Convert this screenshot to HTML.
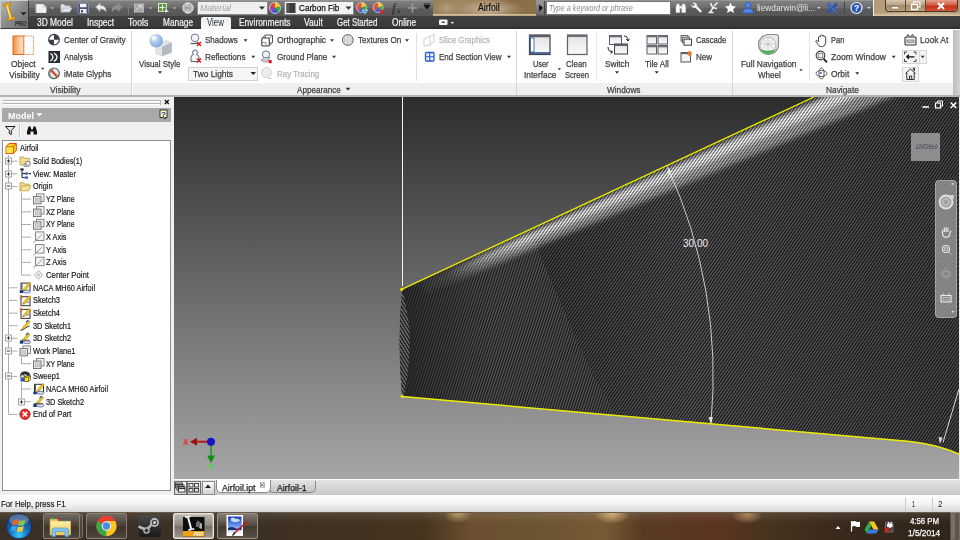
<!DOCTYPE html>
<html>
<head>
<meta charset="utf-8">
<title>Airfoil</title>
<style>
*{box-sizing:border-box;margin:0;padding:0}
html,body{width:960px;height:540px;overflow:hidden;background:#f0f0f0}
body{font-family:"Liberation Sans",sans-serif;font-size:11px;color:#3c3c3c;position:relative}
.abs{position:absolute}
.t{position:absolute;white-space:nowrap;transform-origin:0 50%}
/* top bars */
#qat{left:0;top:0;width:433px;height:16px;background:linear-gradient(#a0a0a0 0,#808080 8%,#6c6c6c 48%,#5c5c5c 56%,#565656 100%)}
#glass1{left:433px;top:0;width:103px;height:16px;background:linear-gradient(rgba(0,0,0,0) 88%,rgba(240,225,190,.75) 91%,rgba(240,225,190,.75) 96%,#4a4030 100%),radial-gradient(ellipse 34px 10px at 58px 9px,rgba(238,220,205,.6),transparent),radial-gradient(ellipse 12px 7px at 14px 8px,rgba(220,200,170,.35),transparent),linear-gradient(90deg,#98805a 0,#a08862 25%,#9a7e56 50%,#886c46 75%,#8c7048 100%)}
#info{left:536px;top:0;width:337px;height:16px;background:linear-gradient(#a0a0a0 0,#808080 8%,#6c6c6c 48%,#5c5c5c 56%,#565656 100%)}
#glass2{left:873.500px;top:0;width:86.500px;height:16px;background:linear-gradient(rgba(255,255,255,0) 80%,rgba(255,240,210,.45) 95%),linear-gradient(90deg,#b39a78,#bea888 40%,#b49c7a)}
#tabs{left:0;top:16px;width:960px;height:13.200px;background:linear-gradient(#404040,#3a3a3a 80%,#2c2c2c)}
#ribbon{left:0;top:29.200px;width:960px;height:54px;background:#fff}
#riblab{left:0;top:83px;width:960px;height:12px;background:#efefef}
#ribline{left:0;top:95px;width:960px;height:1.500px;background:#b4b4b4}
/* left panel */
#lp{left:0;top:97px;width:174px;height:398px;background:#f0f0f0}
#mh{left:2px;top:108px;width:168.500px;height:14px;background:#a9a9a9}
#tree{left:2px;top:140px;width:169px;height:351px;background:#fff;border:1px solid #8e8e8e}
/* viewport */
#vp{left:174px;top:96.500px;width:786px;height:382.500px;background:linear-gradient(#2c2c2c,#a6a6a6);overflow:hidden}
#tabbar{left:174px;top:479.500px;width:786px;height:15px;background:linear-gradient(#e4e4e4,#c8c8c8)}
#status{left:0;top:494.500px;width:960px;height:17.500px;background:linear-gradient(#fefefe,#f6f6f6 45%,#e4e4e4 80%,#d4d4d4)}
#task{left:0;top:511.500px;width:960px;height:28.500px;background:radial-gradient(ellipse 14px 9px at 458px 2px,rgba(225,185,125,.65),transparent),radial-gradient(ellipse 18px 10px at 612px 2px,rgba(240,200,140,.75),transparent),radial-gradient(ellipse 16px 9px at 747px 3px,rgba(225,180,120,.6),transparent),linear-gradient(rgba(255,255,255,.10),rgba(255,255,255,0) 40%),linear-gradient(90deg,#3a3026 0,#3c3024 26%,#45341f 44%,#6a5030 49%,#6c5432 56%,#765a34 63%,#5a3a22 67%,#5c3420 75%,#4a3420 79%,#38291c 88%,#30241a 100%)}
</style>
</head>
<body>
<div id="qat" class="abs"></div>
<div id="glass1" class="abs"></div>
<div id="info" class="abs"></div>
<div id="glass2" class="abs"></div>
<div id="tabs" class="abs"></div>
<div id="ribbon" class="abs"></div>
<div id="riblab" class="abs"></div>
<div id="ribline" class="abs"></div>
<div id="lp" class="abs"></div>
<div id="mh" class="abs"></div>
<div id="tree" class="abs"></div>
<div id="vp" class="abs">
<!--VIEWPORT-->
<svg class="abs" style="left:0;top:0.500px" width="786" height="382" viewBox="0 0 786 382">
<defs>
<linearGradient id="cf" gradientUnits="userSpaceOnUse" x1="0" y1="0" x2="2.080" y2="1.457" spreadMethod="repeat">
<stop offset="0" stop-color="#56565a"/><stop offset="0.25" stop-color="#56565a"/><stop offset="0.5" stop-color="#1e1e1e"/><stop offset="0.75" stop-color="#1e1e1e"/><stop offset="1" stop-color="#56565a"/>
</linearGradient>
<linearGradient id="cfH" gradientUnits="userSpaceOnUse" x1="0" y1="0" x2="2.080" y2="1.457" spreadMethod="repeat">
<stop offset="0" stop-color="#fff"/><stop offset="0.3" stop-color="#fff"/><stop offset="0.5" stop-color="#8c8c8c"/><stop offset="0.8" stop-color="#8c8c8c"/><stop offset="1" stop-color="#fff"/>
</linearGradient>
<linearGradient id="cfL" gradientUnits="userSpaceOnUse" x1="0" y1="0" x2="2.442" y2="0.794" spreadMethod="repeat">
<stop offset="0" stop-color="#4e4e50"/><stop offset="0.25" stop-color="#4e4e50"/><stop offset="0.5" stop-color="#202020"/><stop offset="0.75" stop-color="#202020"/><stop offset="1" stop-color="#4e4e50"/>
</linearGradient>
<linearGradient id="cf2" gradientUnits="userSpaceOnUse" x1="0" y1="0" x2="2.3" y2="-1.4" spreadMethod="repeat">
<stop offset="0" stop-color="#6a6a6a"/><stop offset="0.3" stop-color="#6a6a6a"/><stop offset="0.5" stop-color="#222"/><stop offset="0.8" stop-color="#222"/><stop offset="1" stop-color="#6a6a6a"/>
</linearGradient>
<linearGradient id="hl" gradientUnits="userSpaceOnUse" x1="228" y1="193" x2="247" y2="233.8">
<stop offset="0" stop-color="#fff" stop-opacity="0"/>
<stop offset="0.1" stop-color="#fff" stop-opacity="0.1"/>
<stop offset="0.3" stop-color="#fff" stop-opacity="1"/>
<stop offset="0.5" stop-color="#fff" stop-opacity="0.75"/>
<stop offset="0.75" stop-color="#fff" stop-opacity="0.2"/>
<stop offset="1" stop-color="#fff" stop-opacity="0"/>
</linearGradient>
<linearGradient id="hlm" gradientUnits="userSpaceOnUse" x1="228" y1="0" x2="786" y2="0">
<stop offset="0" stop-color="#fff" stop-opacity="0"/>
<stop offset="0.08" stop-color="#fff" stop-opacity="0.15"/>
<stop offset="0.15" stop-color="#fff" stop-opacity="0.7"/>
<stop offset="0.21" stop-color="#fff" stop-opacity="1"/>
<stop offset="1" stop-color="#fff" stop-opacity="1"/>
</linearGradient>
<filter id="bl" x="-10%" y="-10%" width="120%" height="120%"><feGaussianBlur stdDeviation="2.4"/></filter>
<mask id="hm"><rect width="786" height="382" fill="url(#hlm)"/></mask>
<mask id="band" maskUnits="userSpaceOnUse" x="0" y="0" width="786" height="382"><g mask="url(#hm)"><g filter="url(#bl)"><path d="M246.8,186.0 L317.1,153.5 L387.5,121.0 L457.8,88.5 L528.2,56.0 L598.5,23.5 L668.9,-9.0 L739.2,-41.5 L809.6,-74.0 L823.1,-45.1 L751.7,-14.8 L680.3,15.4 L608.9,45.7 L537.5,76.0 L466.1,106.2 L394.7,136.5 L323.3,166.7 L251.9,197.0Z" fill="#fff" opacity="0.5"/><path d="M247.0,186.4 L317.3,153.9 L387.7,121.4 L458.0,88.9 L528.4,56.4 L598.7,23.9 L669.1,-8.6 L739.4,-41.1 L809.8,-73.6 L816.3,-59.6 L745.5,-28.2 L674.6,3.2 L603.7,34.6 L532.8,66.0 L462.0,97.3 L391.1,128.7 L320.2,160.1 L249.4,191.5Z" fill="#fff" opacity="0.85"/></g></g></mask>
<clipPath id="wing"><path d="M227.700,192.300 L640,0 L786,0 L786,357 Q764,347 736,344 L228,299 Q223,246 228,193 Z"/></clipPath>
<linearGradient id="ldark" gradientUnits="userSpaceOnUse" x1="234" y1="0" x2="310" y2="0">
<stop offset="0" stop-color="#1c1c1c" stop-opacity="0.6"/><stop offset="0.2" stop-color="#1c1c1c" stop-opacity="0.45"/><stop offset="1" stop-color="#1c1c1c" stop-opacity="0"/>
</linearGradient>
<linearGradient id="rdark" gradientUnits="userSpaceOnUse" x1="500" y1="0" x2="786" y2="0">
<stop offset="0" stop-color="#000" stop-opacity="0"/><stop offset="1" stop-color="#000" stop-opacity="0.14"/>
</linearGradient>
<linearGradient id="fold" gradientUnits="userSpaceOnUse" x1="380" y1="0" x2="520" y2="0">
<stop offset="0" stop-color="#000" stop-opacity="0.2"/>
<stop offset="1" stop-color="#000" stop-opacity="0"/>
</linearGradient>
</defs>
<path d="M227.700,192.300 L640,0 L786,0 L786,357 Q764,347 736,344 L228,299 Q223,246 228,193 Z" fill="url(#cf)"/>
<g clip-path="url(#wing)">
<path d="M228,193 L349,136.500 L353,135 L363,150 L368,163 L382.700,196 L402.700,243 L419,276 L436,306 L441,318 L228,299Z" fill="url(#cfL)"/>
<path d="M353,135 L363,150 L368,163 L382.700,196 L402.700,243 L419,276 L436,306 L441,318 L560,330 L560,100 L430,99 Z" fill="url(#fold)"/>
<path d="M228,193 L350,136 L350,310 L228,299Z" fill="url(#ldark)"/>
<path d="M228,192 Q234,215 235.500,235 Q236.500,268 230,299 L228,299 Q223,246 228,192Z" fill="url(#cf2)"/>
<rect x="500" y="0" width="286" height="382" fill="url(#rdark)"/>
<rect x="0" y="0" width="786" height="382" fill="url(#cfH)" mask="url(#band)"/>
</g>
<!-- yellow edges -->
<path d="M227.700,192.300 L640,0" stroke="#eaea00" stroke-width="1.3" fill="none"/>
<path d="M228,299.5 L736,344.5 Q764,347.5 786,357.5" stroke="#eaea00" stroke-width="1.5" fill="none"/>
<circle cx="227.700" cy="192.300" r="1.6" fill="#e6e600"/><circle cx="228" cy="299.5" r="1.4" fill="#e6e600"/>
<!-- white extension line -->
<path d="M228.5,0 V189" stroke="#f4f4f4" stroke-width="1"/>
<!-- dimension arc -->
<path d="M493,69 A502,502 0 0 1 537,326" stroke="#e4e4e4" stroke-width="0.85" fill="none"/>
<path d="M494,71 l-0.5,6 l4,-2z" fill="#e8e8e8"/>
<path d="M537,327 l-2.5,-7 l4.5,0.3z" fill="#e8e8e8"/>
<path d="M785,292 L769,345.500" stroke="#d8d8d8" stroke-width="1" fill="none"/>
<path d="M766,347 l-1.5,-7 l4,0.5z" fill="#d8d8d8"/>
<text x="509" y="150" font-family="Liberation Sans,sans-serif" font-size="10" fill="#f0f0f0">30.00</text>
<!-- triad -->
<path d="M23,344.700 H34" stroke="#b41c1c" stroke-width="2"/><path d="M16,344.700 l7,-4 v8z" fill="#a01010"/>
<path d="M37,348 V359" stroke="#18a018" stroke-width="1.600"/><path d="M37,366 l-4,-7.500 h8z" fill="#109010"/>
<circle cx="37" cy="344.700" r="4" fill="#1414c0"/>
<text x="11.900" y="348" font-family="Liberation Sans,sans-serif" font-size="8.500" font-weight="bold" fill="#f02828" text-anchor="middle">X</text>
<text x="37.200" y="373.200" font-family="Liberation Sans,sans-serif" font-size="8.500" font-weight="bold" fill="#30e030" text-anchor="middle">Y</text>
<!-- view cube -->
<rect x="737" y="36" width="29" height="28" fill="#a8a8a8" fill-opacity="0.78"/>
<text x="0" y="0" transform="translate(752,49.500) rotate(180)" font-family="Liberation Sans,sans-serif" font-size="7.500" fill="#5c5c68" text-anchor="middle" dominant-baseline="central" font-weight="bold" textLength="22" lengthAdjust="spacingAndGlyphs">FRONT</text>
<!-- nav bar -->
<rect x="761.500" y="83.500" width="21" height="137" rx="3" fill="#a4a4a4" fill-opacity="0.72" stroke="#c4c4c4" stroke-opacity="0.7"/>
<circle cx="772" cy="105" r="6.500" fill="#b8b8b8" fill-opacity="0.6" stroke="#e4e4e4" stroke-width="1.800"/><circle cx="772" cy="105" r="3.300" fill="none" stroke="#d0d0d0" stroke-width="0.900"/>
<path d="M776,99 h3 v3" fill="none" stroke="#e4e4e4" stroke-width="1.300"/>
<path d="M768.500,136 v-3 M770.300,135 v-4.500 M772.100,135 v-5 M773.900,135 v-4.300 M768.500,136 q0,4 3.500,4.300 q3.800,0 3.800,-4 l1.200,-2.500" stroke="#f0f0f0" stroke-width="1.100" fill="none"/>
<circle cx="772" cy="152" r="3.500" fill="none" stroke="#e8e8e8" stroke-width="1.100"/><rect x="770.500" y="150.800" width="3" height="2.400" fill="none" stroke="#e8e8e8" stroke-width="0.700"/><path d="M774.500,154.800 l2.500,2.500" stroke="#ccc" stroke-width="1"/>
<ellipse cx="772" cy="177" rx="5" ry="2.500" fill="none" stroke="#b4b4b4" stroke-opacity="0.6" stroke-width="0.900"/><ellipse cx="772" cy="177" rx="2.300" ry="5" fill="none" stroke="#b4b4b4" stroke-opacity="0.6" stroke-width="0.900"/>
<rect x="767" y="198.500" width="10" height="6.500" fill="none" stroke="#ececec" stroke-width="1.100"/><rect x="769" y="200.500" width="6" height="2.500" fill="none" stroke="#ddd" stroke-width="0.600"/><path d="M768.500,198 l1,-1.500 M775.500,198 l-1,-1.500" stroke="#e8e8e8" stroke-width="0.800"/>
<path d="M777.500,85.500 l2.500,2.500 M780,85.500 l-2.500,2.500" stroke="#e0e0e0" stroke-width="0.800"/>
<path d="M777.300,214 h3 l-1.500,2z" fill="#e0e0e0"/>
<path d="M763,123.500 h18 M763,142.500 h18 M763,164.500 h18 M763,190.500 h18" stroke="#8c8c8c" stroke-opacity="0.5" stroke-width="1"/>
<!-- mini window controls -->
<path d="M748.500,10 h6.500" stroke="#fff" stroke-width="1.600"/>
<rect x="761.500" y="6" width="5" height="5" fill="none" stroke="#fff" stroke-width="1.200"/>
<path d="M763.500,5.500 v-1.500 h5 v5 h-1.500" fill="none" stroke="#fff" stroke-width="1"/>
<path d="M776.700,5.500 l5.500,5.500 M782.200,5.500 l-5.500,5.500" stroke="#fff" stroke-width="1.600"/>
</svg>

<!--/VIEWPORT-->
</div>
<div id="tabbar" class="abs"></div>
<div id="status" class="abs"></div>
<div id="task" class="abs"></div>
<!--TOP-->
<!-- app button -->
<div class="abs" style="left:0;top:0;width:29px;height:29px;background:linear-gradient(135deg,#b8b8b8,#8a8a8a 50%,#6e6e6e);border:1px solid #3a3a3a;border-top-color:#d0d0d0;border-left-color:#c8c8c8"></div>
<svg class="abs" style="left:0;top:0" width="30" height="30" viewBox="0 0 30 30">
<path d="M3.200,4.500 L10.800,2.600 L11.200,4.600 L8.800,5.200 L12.200,17.300 L14.800,16.700 L15.300,18.800 L7.600,20.800 L7.100,18.800 L9.600,18.100 L6.200,6 L3.700,6.600Z" fill="#f2b51d" stroke="#a36d05" stroke-width="0.6"/>
<path d="M6.200,6 L7.700,5.500 L11,17.600 L9.600,18.100Z" fill="#ffe27a"/>
<path d="M20.500,12.300 h6 l-3,3.200z" fill="#222"/>
</svg>
<!-- active tab -->
<div class="abs" style="left:200.500px;top:17px;width:30px;height:12.500px;background:linear-gradient(#e9eef2,#fafafa);border-radius:2px 2px 0 0"></div>
<!-- QAT icons -->
<svg class="abs" style="left:30px;top:0" width="410" height="16" viewBox="30 0 410 16">
<g fill="none" stroke-linecap="round">
<!-- new -->
<path d="M36.500,4.500 h7 l2.500,2.500 v5.500 h-9.500z" fill="#f0f0f4" stroke="#e4e4e8"/><path d="M43.500,4.500 v2.500 h2.500" fill="none" stroke="#b0b0b8" stroke-width="0.700"/>
<path d="M51,7.500 h3 l-1.500,1.800z" fill="#ccc" stroke="none"/>
<!-- open -->
<path d="M61,11.500 v-7 h3 l1,1.500 h5 v2 h-7 l-2,3.500z M63.500,8 h8.500 l-2.500,4 h-8z" fill="#dfe3ea" stroke="#c4c8d0" stroke-width="0.8"/>
<!-- save -->
<rect x="78" y="3" width="10.500" height="10.500" rx="1" fill="#46567a" stroke="#8a96b0" stroke-width="0.800"/>
<rect x="80" y="3.800" width="6.500" height="3.400" fill="#f4f4f8" stroke="none"/><rect x="80" y="9" width="6.500" height="4" fill="#f0f0f4" stroke="none"/><rect x="81" y="10.300" width="2" height="2" fill="#333" stroke="none"/>
<!-- undo -->
<path d="M96,7 l4,-3.500 v2.300 q6,-0.300 6,5.700 q-1.500,-3 -6,-2.800 v2.300z" fill="#f0f0f0" stroke="#d8d8d8" stroke-width="0.6"/>
<!-- redo -->
<path d="M122,7 l-4,-3.500 v2.300 q-6,-0.300 -6,5.700 q1.500,-3 6,-2.800 v2.300z" fill="#8e8e8e" stroke="#9a9a9a" stroke-width="0.6"/>
<path d="M128.500,1.500 v13" stroke="#7a7a7a" stroke-width="1"/>
<!-- return -->
<rect x="134.500" y="4" width="9" height="8" fill="#a8a8a8" stroke="#bcbcbc"/><path d="M136,10 l5,-4 M139,5.500 h2.500 v2.500" stroke="#ddd"/>
<path d="M149,7.500 h3 l-1.500,1.800z" fill="#ccc" stroke="none"/>
<!-- select -->
<rect x="158.500" y="3.500" width="8" height="8" fill="#5a9a4a" stroke="#cfe6c8"/><path d="M160,7.500 h5 M162.500,5 v5" stroke="#e8f4e4"/>
<path d="M165,8 l4.500,4 h-2.800 l-1.200,2.300z" fill="#fff" stroke="#444" stroke-width="0.5"/>
<path d="M173,7.500 h3 l-1.500,1.800z" fill="#ccc" stroke="none"/>
<!-- globe -->
<circle cx="188" cy="8" r="5.200" fill="#c8c8c8" stroke="#e8e8e8"/><path d="M185,5 q3,3 0,6 M190,4 q-3,4 1,8 M183.500,8 h9" stroke="#888" stroke-width="0.8"/>
</g>
<!-- material combo -->
<rect x="197.500" y="1.500" width="70" height="13" fill="#efefef" stroke="#8a8a8a"/>
<path d="M259,6.500 h6 l-3,3.200z" fill="#333"/>
<!-- color wheel -->
<circle cx="275" cy="8" r="5.500" fill="#e04040"/>
<path d="M275,8 L275,2.500 A5.500,5.500 0 0 1 280.200,6.300Z" fill="#f0d020"/>
<path d="M275,8 L280.200,6.300 A5.500,5.500 0 0 1 278.200,12.500Z" fill="#30b040"/>
<path d="M275,8 L278.200,12.500 A5.500,5.500 0 0 1 271.800,12.500Z" fill="#3060e0"/>
<path d="M275,8 L271.800,12.500 A5.500,5.500 0 0 1 269.800,6.300Z" fill="#a040c0"/>
<circle cx="275" cy="8" r="5.500" fill="none" stroke="#ddd" stroke-width="0.8"/>
<!-- appearance combo -->
<rect x="284.500" y="1.500" width="69" height="13" fill="#f2f2f2" stroke="#8a8a8a"/>
<rect x="286.500" y="3" width="9" height="10" fill="#3c3c3c"/><rect x="286.500" y="3" width="3" height="10" fill="#555"/>
<path d="M345.500,6.500 h6 l-3,3.200z" fill="#333"/>
<!-- two color wheels -->
<g id="cw2"><circle cx="361.500" cy="7.500" r="5" fill="#e05050"/><path d="M361.500,7.500 v-5 a5,5 0 0 1 4.700,3.400z" fill="#f0d020"/><path d="M361.500,7.500 l4.700,-1.600 a5,5 0 0 1 -1.800,5.700z" fill="#30b040"/><path d="M361.500,7.500 l2.900,4.100 a5,5 0 0 1 -5.800,0z" fill="#3060e0"/><circle cx="361.500" cy="7.500" r="5" fill="none" stroke="#ddd" stroke-width="0.7"/></g>
<path d="M362,10 h6 l-3,4z" fill="#4aa0e8" stroke="#fff" stroke-width="0.5"/>
<use href="#cw2" x="16.500"/>
<path d="M380,9.500 l4,4 M384,9.500 l-4,4" stroke="#e02020" stroke-width="1.500"/>
<text x="392" y="12" font-family="Liberation Serif,serif" font-style="italic" font-size="12" fill="#222">f</text><text x="397" y="13" font-family="Liberation Serif,serif" font-style="italic" font-size="7" fill="#222">x</text>
<path d="M408,8 h9 M412.500,3.500 v9" stroke="#9a9a9a" stroke-width="1.600"/>
<path d="M424,5.500 h6 l-3,3.500z M424,4 h6" fill="#111" stroke="#111" stroke-width="0.8"/>
<!-- online tab icon -->
</svg>
<svg class="abs" style="left:436px;top:16px" width="24" height="14" viewBox="0 0 24 14">
<rect x="3" y="3.500" width="8.500" height="5.500" rx="1" fill="#f4f4f4"/><path d="M5,7 l2.200,-2 l2.200,2z" fill="#444"/><path d="M14.500,6 h3.600 l-1.800,2z" fill="#eee"/>
</svg>
<!-- info center -->
<div class="abs" style="left:536px;top:1px;width:9px;height:14px;background:linear-gradient(#999,#666);border-right:1px solid #444"></div>
<svg class="abs" style="left:536px;top:0" width="10" height="16"><path d="M3,4.500 l4,3.500 l-4,3.500z" fill="#111"/></svg>
<div class="abs" style="left:546px;top:1px;width:125px;height:14px;background:#fff;border:1px solid #777;border-radius:1px"></div>
<svg class="abs" style="left:672px;top:0" width="203" height="16" viewBox="672 0 203 16">
<!-- binoculars -->
<path d="M676,12.500 v-5 l1,-3.500 h2 l0.800,3.500 v5z M681.800,12.500 v-5 l0.800,-3.500 h2 l1,3.500 v5z" fill="#fff" stroke="#ddd" stroke-width="0.5"/><rect x="679.500" y="6" width="2.500" height="2.500" fill="#eee"/>
<!-- wrench -->
<path d="M692.500,3 a3,3 0 0 1 4.500,3 l5,5 l-1.500,1.800 l-5.200,-5 a3,3 0 0 1 -3.800,-3.300 l2,1.800 l1.500,-1.500z" fill="#f0f0f0"/>
<!-- satellite -->
<path d="M710,12.500 l3.500,-5.500 M708.500,12.500 h5 M711,3 q0,5 6,5.500 M714,6 l3.500,-3.500" stroke="#f0f0f0" stroke-width="1.500" fill="none"/>
<!-- star -->
<path d="M730.500,2.500 l1.600,3.600 l3.900,0.400 l-2.900,2.700 l0.800,3.900 l-3.400,-2 l-3.400,2 l0.800,-3.900 l-2.900,-2.700 l3.900,-0.400z" fill="#fff"/>
<!-- user -->
<circle cx="748" cy="5" r="2.800" fill="#4f86e8" stroke="#2a58b8" stroke-width="0.6"/><path d="M742.500,13 q0.500,-4.500 5.500,-4.500 q5,0 5.500,4.500z" fill="#4f86e8" stroke="#2a58b8" stroke-width="0.6"/>
<path d="M817,7 h3.600 l-1.800,2z" fill="#ddd"/>
<!-- exchange X -->
<path d="M827.500,3.500 l9.500,9 M837,3.500 l-9.500,9" stroke="#2b53b0" stroke-width="2.600"/><path d="M827.500,3.500 l9.500,9" stroke="#5d8be8" stroke-width="1"/>
<path d="M844.500,2 v12" stroke="#444" stroke-width="1"/>
<circle cx="856.500" cy="8" r="5.500" fill="#2a55b8" stroke="#f4f4f4" stroke-width="1.200"/>
<text x="856.500" y="11.300" font-family="Liberation Sans,sans-serif" font-weight="bold" font-size="9" fill="#fff" text-anchor="middle">?</text>
<path d="M867,7 h3.600 l-1.800,2z" fill="#ddd"/>
</svg>
<!-- window controls -->
<div class="abs" style="left:885px;top:0;width:73px;height:12px;border:1px solid #4a3a28;border-top:0;border-radius:0 0 4px 4px;background:linear-gradient(#d8c8b0,#b9a282 45%,#a38a66 50%,#b8a07e);overflow:hidden">
<div class="abs" style="left:19px;top:0;width:1px;height:12px;background:#5a4a38"></div>
<div class="abs" style="left:39px;top:0;width:1px;height:12px;background:#5a4a38"></div>
<div class="abs" style="left:40px;top:0;width:33px;height:12px;background:linear-gradient(#e8a090,#d2553a 45%,#c03018 50%,#d8583a)"></div>
</div>
<svg class="abs" style="left:885px;top:0" width="75" height="13" viewBox="885 0 75 13">
<rect x="891.500" y="6.500" width="7" height="2.500" fill="#fff" stroke="#555" stroke-width="0.5"/>
<rect x="911.500" y="4.500" width="6" height="5" fill="none" stroke="#fff" stroke-width="1.300"/><path d="M913.500,4 v-2 h6.500 v5 h-2" fill="none" stroke="#fff" stroke-width="1.100"/>
<path d="M938,3 l6,6 M944,3 l-6,6" stroke="#fff" stroke-width="2"/>
</svg>

<!--/TOP-->
<!--RIBBON-->
<!-- separators -->
<div class="abs" style="left:130.500px;top:31px;width:1px;height:64px;background:#d4d4d4"></div><div class="abs" style="left:131.500px;top:31px;width:1px;height:64px;background:#fdfdfd"></div>
<div class="abs" style="left:515.500px;top:31px;width:1px;height:64px;background:#d4d4d4"></div>
<div class="abs" style="left:731.500px;top:31px;width:1px;height:64px;background:#d4d4d4"></div>
<div class="abs" style="left:416px;top:33px;width:1px;height:48px;background:#e2e2e2"></div>
<div class="abs" style="left:595.500px;top:33px;width:1px;height:48px;background:#e6e6e6"></div>
<div class="abs" style="left:808.500px;top:33px;width:1px;height:48px;background:#e2e2e2"></div>
<div class="abs" style="left:952.500px;top:30px;width:8px;height:65px;background:linear-gradient(90deg,#bdbdbd,#d6d6d6)"></div>
<!-- combo Two Lights -->
<div class="abs" style="left:187.500px;top:66.500px;width:70px;height:14.500px;background:#f6f6f6;border:1px solid #d0d0d0"></div>
<!-- nav buttons -->
<div class="abs" style="left:902px;top:49.500px;width:25px;height:14.500px;background:#f4f4f4;border:1px solid #d6d6d6"></div>
<div class="abs" style="left:918.500px;top:50px;width:1px;height:13.500px;background:#d6d6d6"></div>
<div class="abs" style="left:902px;top:66.500px;width:17px;height:15px;background:#f4f4f4;border:1px solid #d6d6d6"></div>
<svg class="abs" style="left:0;top:30px" width="960" height="66" viewBox="0 30 960 66">
<defs>
<linearGradient id="og" x1="0" x2="1" y1="0" y2="0"><stop offset="0" stop-color="#f08a3c"/><stop offset="0.55" stop-color="#fbc79a"/><stop offset="1" stop-color="#fde3cc"/></linearGradient>
<radialGradient id="sph" cx="0.35" cy="0.3" r="0.8"><stop offset="0" stop-color="#e8f2ff"/><stop offset="0.5" stop-color="#a4c2ea"/><stop offset="1" stop-color="#7a9ed8"/></radialGradient>
<linearGradient id="wing1" x1="0" x2="0" y1="0" y2="1"><stop offset="0" stop-color="#c8c8c8"/><stop offset="0.2" stop-color="#e8e8ea"/><stop offset="1" stop-color="#fafafa"/></linearGradient>
</defs>
<g fill="none">
<!-- small arrows -->
<g fill="#333" stroke="none">
<path d="M41,67.800 h3.400 l-1.700,2z"/><path d="M158.0,71.3 h4 l-2,2.400z"/>
<path d="M243.5,39.3 h4 l-2,2.400z"/><path d="M251.3,55.8 h4 l-2,2.400z"/><path d="M250.500,72 h5.500 l-2.750,3z" fill="#222"/>
<path d="M330.0,39.3 h4 l-2,2.400z"/><path d="M332.0,55.8 h4 l-2,2.400z"/><path d="M405.0,39.3 h4 l-2,2.400z"/>
<path d="M345.500,87.800 h5 l-2.500,2.800z"/>
<path d="M507.0,55.8 h4 l-2,2.400z"/><path d="M557.700,68.300 h3.400 l-1.700,2z"/><path d="M615.0,71.3 h4 l-2,2.400z"/><path d="M654.7,71.3 h4 l-2,2.400z"/>
<path d="M799.300,69.300 h3.400 l-1.700,2z"/><path d="M891.7,55.8 h4 l-2,2.400z"/><path d="M855.2,72.3 h4 l-2,2.400z"/><path d="M920.7,55.8 h4 l-2,2.400z"/>
</g>
<!-- Object visibility -->
<rect x="13" y="36" width="11" height="18.500" fill="url(#og)" stroke="#e06a20" stroke-width="1"/>
<rect x="24" y="36" width="9.500" height="18.500" fill="#fff" stroke="#d86a30" stroke-width="0.9" stroke-dasharray="1.200 1"/>
<!-- CoG -->
<circle cx="54" cy="39.700" r="5.300" fill="#fff" stroke="#3a4048" stroke-width="1.200"/><path d="M54,39.700 v-5.300 a5.300,5.300 0 0 1 5.300,5.300z M54,39.700 v5.300 a5.300,5.300 0 0 1 -5.300,-5.300z" fill="#3a4048"/>
<!-- Analysis -->
<rect x="49" y="51.500" width="10.500" height="11" fill="#30343c" stroke="#20242c"/><path d="M50.500,53.500 q5,3.500 0,7.500 M54,53 q6,4 0,8.500" stroke="#fff" stroke-width="1.300"/>
<!-- iMate -->
<circle cx="54" cy="73.300" r="5.300" fill="#e8e8ee" stroke="#555a66" stroke-width="1.200"/><path d="M51,70 l6,6.500" stroke="#d84a1a" stroke-width="2.200"/><path d="M50,76 q-1,-5 4,-7.500" stroke="#666" stroke-width="0.800"/>
<!-- Visual Style -->
<path d="M156,45 l10,-4.500 l5.500,2 v10 l-9.500,3.500 l-6,-2.500z" fill="#e2e4e8" stroke="#c6c8cc" stroke-width="0.600"/><path d="M162,47 l9.500,-4.500 v10 l-9.500,3.500z" fill="#b4b8c0"/>
<circle cx="156.200" cy="40.800" r="6.800" fill="url(#sph)"/><ellipse cx="154" cy="38" rx="2.200" ry="1.800" fill="#fff" fill-opacity="0.85"/>
<!-- Shadows -->
<circle cx="195" cy="37.800" r="3.800" fill="#f4f6fa" stroke="#6a7a96" stroke-width="1"/><path d="M190.500,43.500 h8.500" stroke="#50607c" stroke-width="1.300"/><path d="M197,42 l4,4 M201,42 l-4,4" stroke="#e01818" stroke-width="1.500"/>
<!-- Reflections -->
<path d="M191,61.500 v-4 q0,-2.500 2.500,-3 a2.500,2.500 0 1 1 3,0 q2.500,0.500 2.500,3 v4z" fill="#f4f6fa" stroke="#50607c" stroke-width="1"/><path d="M197,58.500 l4,4 M201,58.500 l-4,4" stroke="#e01818" stroke-width="1.500"/>
<!-- Orthographic -->
<rect x="265" y="35" width="7.500" height="8" rx="1" stroke="#4a4e58" stroke-width="1"/><rect x="261.800" y="38" width="7.500" height="8" rx="1" fill="#fff" stroke="#3a3e48" stroke-width="1.100"/><path d="M262,38 l3,-3 M269.300,38.300 l3,-3 M269.300,46 l3,-3" stroke="#4a4e58" stroke-width="0.800"/><path d="M262,42.500 h4 v3.500" stroke="#666" stroke-width="0.700"/>
<!-- Ground Plane -->
<circle cx="266" cy="54.500" r="3.600" fill="#f0f4fa" stroke="#60708c" stroke-width="1"/><path d="M261,60 l3,-2.500 h6 l-3,4.500 h-3z" fill="#c8ccd4" stroke="#7a8090" stroke-width="0.700"/><rect x="268.500" y="60" width="3.200" height="3.200" fill="#e01818"/>
<!-- Ray tracing disabled -->
<circle cx="266.500" cy="72.500" r="5" fill="#ececec" stroke="#d4d4d4" stroke-width="1"/><path d="M268,78.500 h4" stroke="#ccc"/>
<!-- Textures On -->
<circle cx="347.800" cy="40" r="5.400" fill="#e4e4e4" stroke="#5a5e66" stroke-width="1"/><path d="M347.800,34.800 v10.500 M344,36.500 q2,3.500 0,7 M351.500,36.500 q-2,3.500 0,7" stroke="#b0b0b0" stroke-width="0.700"/>
<!-- Slice Graphics disabled -->
<path d="M424,39 l6,-2.500 l4,-2.500 v8 l-4,3 l-6,1z M430,36.500 v9" stroke="#cfcfcf" stroke-width="1"/>
<!-- End Section View -->
<rect x="425.500" y="52.500" width="8.500" height="8.500" rx="1" fill="#eaf0ff" stroke="#2a5ad0" stroke-width="1.300"/><path d="M429.750,52.500 v8.500 M425.500,56.750 h8.500" stroke="#2a5ad0" stroke-width="1.100"/>
<!-- User Interface -->
<rect x="529.500" y="35" width="20.500" height="19.500" fill="url(#wing1)" stroke="#3c4450" stroke-width="1.200"/><rect x="529.500" y="35" width="20.500" height="2.200" fill="#5a5e66"/><rect x="530.500" y="38" width="3.500" height="14" fill="#fff" stroke="#2c58a8" stroke-width="0.800"/><path d="M530,53 h20" stroke="#2c4a80" stroke-width="1.600"/>
<!-- Clean Screen -->
<rect x="567.500" y="35" width="19.500" height="19.500" fill="url(#wing1)" stroke="#5a5e66" stroke-width="1.200"/><rect x="567.500" y="35" width="19.500" height="2" fill="#6a6e76"/>
<!-- Switch -->
<rect x="609.500" y="35.500" width="12" height="9" fill="url(#wing1)" stroke="#5a5e66" stroke-width="1"/><rect x="609.500" y="35.500" width="12" height="1.800" fill="#6a6e76"/>
<rect x="614.500" y="44" width="13" height="10" fill="url(#wing1)" stroke="#4a4e56" stroke-width="1.100"/><rect x="614.500" y="44" width="13" height="2" fill="#5a5e66"/>
<path d="M624,36 q4,0 4,4.500 M628,41 l-1.800,-2 M628,41 l1.500,-2.200" stroke="#222" stroke-width="1"/><path d="M608,47 q0,5 4.500,5 M612.500,52 l-2,-1.600 M612.500,52 l-2,1.600" stroke="#222" stroke-width="1"/>
<!-- Tile All -->
<g stroke="#5a5e66" stroke-width="1" fill="url(#wing1)"><rect x="647" y="35.500" width="9.500" height="8.500"/><rect x="658" y="35.500" width="9.500" height="8.500"/><rect x="647" y="45.500" width="9.500" height="8.500"/><rect x="658" y="45.500" width="9.500" height="8.500"/></g>
<g fill="#6a6e76"><rect x="647" y="35.500" width="9.500" height="1.800"/><rect x="658" y="35.500" width="9.500" height="1.800"/><rect x="647" y="45.500" width="9.500" height="1.800"/><rect x="658" y="45.500" width="9.500" height="1.800"/></g>
<!-- Cascade -->
<rect x="681" y="35.500" width="7" height="5.500" fill="#e8e8e8" stroke="#555" stroke-width="0.900"/><rect x="682.500" y="37.300" width="7" height="5.500" fill="#e8e8e8" stroke="#555" stroke-width="0.900"/><rect x="684" y="39.200" width="7.500" height="6" fill="#f4f4f4" stroke="#444" stroke-width="1"/>
<!-- New -->
<rect x="681" y="52.500" width="9.500" height="9.500" fill="#f4f4f4" stroke="#555" stroke-width="1"/><rect x="681" y="52.500" width="9.500" height="1.600" fill="#666"/><circle cx="689.500" cy="53.500" r="2" fill="#f08020" stroke="#c05010" stroke-width="0.500"/>
<!-- Nav wheel -->
<path d="M768,34.500 h8 q2.500,0 2.500,2.500 v8 a10,10 0 1 1 -10.500,-10.500z" fill="#e8e8e8" stroke="#8a8a8a" stroke-width="1.200"/>
<circle cx="768" cy="45" r="8" fill="#f4f4f4" stroke="#aaa" stroke-width="0.800"/><path d="M768,37.500 v13 M761,44 h14 M763,39.500 l10,9 M773,39.500 l-10,9" stroke="#b8b8b8" stroke-width="0.700"/>
<path d="M760.500,49 q7.500,3.500 15,0 a8.200,8.200 0 0 1 -15,0z" fill="#4ab050"/>
<!-- Pan -->
<path d="M818.500,41.500 v-4.500 q1,-1.200 1.800,0 v-1.500 q1,-1.200 1.800,0 v0.300 q1,-1.200 1.800,0 v1 q1,-1 1.800,0.200 v5 q0,4 -3,4.500 h-2.500 q-1.500,-0.500 -2.500,-2.500 l-2,-3 q0.800,-1.200 2,0z" fill="#fff" stroke="#333" stroke-width="0.900"/>
<!-- Zoom Window -->
<circle cx="820.500" cy="55.500" r="4.300" fill="#f0f0f0" stroke="#444" stroke-width="1.200"/><rect x="818.300" y="53.300" width="4.400" height="4.400" stroke="#777" stroke-width="0.800"/><path d="M823.800,59 l3.200,3.300" stroke="#222" stroke-width="1.800"/>
<!-- Orbit -->
<ellipse cx="821.500" cy="73.500" rx="5.500" ry="3" stroke="#555" stroke-width="1"/><ellipse cx="821.500" cy="73.500" rx="2.600" ry="5.500" stroke="#555" stroke-width="1"/><circle cx="820.800" cy="73" r="1" fill="#2060e0"/>
<!-- Look At -->
<rect x="905" y="37" width="11" height="8" rx="1" fill="#f0f0f0" stroke="#333" stroke-width="1.100"/><rect x="907" y="40" width="7" height="2.500" fill="#ccc" stroke="#555" stroke-width="0.600"/><path d="M906.500,36.500 l1.500,-2 l1.500,2 M911,36.500 l1.500,-2 l1.500,2" stroke="#333" stroke-width="1"/>
<!-- prev view -->
<path d="M904.500,54.500 v-2.500 h2.500 M913.500,52 h2.500 v2.500 M916,59 v2.500 h-2.500 M907,61.500 h-2.500 v-2.500" stroke="#444" stroke-width="1"/><path d="M906.500,56.800 h8 M906.500,56.800 l2.500,-2 M906.500,56.800 l2.500,2" stroke="#111" stroke-width="1.200"/>
<!-- home -->
<path d="M905.500,73.500 l5,-4.500 l5,4.500 M906.800,72.800 v6.700 h7.400 v-6.700 M909.500,79.500 v-3.500 h2.200 v3.500 M913.300,70 v-1.800 h1.200 v3" stroke="#333" stroke-width="1"/>
</g>
</svg>

<!--/RIBBON-->
<!--TREE-->
<svg class="abs" style="left:0;top:140px" width="172" height="352" viewBox="0 140 172 352">
<defs>
<g id="i-cube"><path d="M0.500,4 l3,-3.300 h7.300 v6.800 l-3,3.300 h-7.300z" fill="#ffd61a" stroke="#d84a10" stroke-width="1"/><path d="M0.500,4 h7.300 v6.800 M7.800,4 l3,-3.300" fill="none" stroke="#d84a10" stroke-width="0.900"/><path d="M1,4.500 h6.300 v5.800 h-6.300z" fill="#ffe44a"/></g>
<g id="i-folder"><path d="M0.500,10 v-8 h3.500 l1,1.300 h4.500 v2" fill="#f4dc8a" stroke="#b89a40" stroke-width="0.800"/><path d="M0.500,10 l2.300,-5 h8.700 l-2.500,5z" fill="#f8e4a0" stroke="#b89a40" stroke-width="0.800"/></g>
<g id="i-folderb"><path d="M0.500,9.500 v-8 h3.500 l1,1.300 h5 v6.700z" fill="#f4dc8a" stroke="#a89a70" stroke-width="0.800"/><circle cx="8.300" cy="8.300" r="2.600" fill="#e8e8f0" stroke="#666a78" stroke-width="0.800"/><path d="M4.500,8.500 h3 v2.500 h-3z" fill="#c8c8d0" stroke="#666" stroke-width="0.500"/></g>
<g id="i-view"><path d="M2.500,1.500 v8 h3 M2.500,5.500 h3" fill="none" stroke="#222" stroke-width="1"/><rect x="0.800" y="0.300" width="3.400" height="2" fill="#223"/><rect x="5.500" y="4.300" width="3" height="2.400" fill="#3a6ad0"/><rect x="5.500" y="8.300" width="3" height="2.400" fill="#3a6ad0"/><path d="M9,5.500 h2.500" stroke="#222" stroke-width="1.200"/></g>
<g id="i-plane"><rect x="3.500" y="0.500" width="7.500" height="7.500" fill="#f0f0f0" stroke="#7a7a7a" stroke-width="0.900"/><rect x="0.500" y="3" width="7.500" height="7.500" fill="#e8e8e8" stroke="#6e6e6e" stroke-width="0.900"/><rect x="2.300" y="4.800" width="4" height="4" fill="#d0d0d0" stroke="#aaa" stroke-width="0.500"/></g>
<g id="i-axis"><rect x="2.500" y="0.500" width="8.500" height="8.500" fill="#f4f4f4" stroke="#7a7a7a" stroke-width="0.900"/><path d="M0.300,11.300 l9,-8.500" stroke="#9a9a9a" stroke-width="1"/></g>
<g id="i-point"><path d="M5.500,1.300 l4.200,4.200 l-4.200,4.200 l-4.200,-4.200z" fill="#f0f0f0" stroke="#aaa" stroke-width="0.900"/><circle cx="5.500" cy="5.500" r="1.300" fill="#bbb"/></g>
<g id="i-sketch"><rect x="1.500" y="2" width="9" height="9" fill="#fafafa" stroke="#333" stroke-width="1"/><path d="M3,9 l3,-1.500 l3.500,-0.200" stroke="#5a80c0" stroke-width="1" fill="none"/><path d="M4,7.500 l5.500,-6.500 l1.800,1.200 l-5.500,6.500 l-2.300,0.800z" fill="#f4c81a" stroke="#a07808" stroke-width="0.500"/><path d="M0.500,0.300 l2,2.400 M2.500,0.300 l-2,2.400 M0.300,4 h2.500" stroke="#e06a20" stroke-width="0.900"/></g>
<g id="i-sketchs"><rect x="1.500" y="1" width="9" height="8" fill="#fafafa" stroke="#333" stroke-width="1"/><path d="M2.500,1.500 v6" stroke="#333" stroke-width="0.800"/><path d="M4,7 l5.500,-6.500 l1.800,1.200 l-5.500,6.500 l-2.300,0.800z" fill="#f4c81a" stroke="#a07808" stroke-width="0.500"/><rect x="0.300" y="8.300" width="3.500" height="2.700" fill="#1a3a80"/><ellipse cx="7.500" cy="9.500" rx="3.500" ry="1.500" fill="#e8d8e0" stroke="#3a5aa0" stroke-width="0.700"/></g>
<g id="i-sk3d"><path d="M1,10.500 q3,-1 5,-2.500 t4,-2" stroke="#222" stroke-width="1" fill="none"/><path d="M3.500,7 l5.500,-6.500 l1.800,1.200 l-5.500,6.500 l-2.300,0.800z" fill="#f4c81a" stroke="#a07808" stroke-width="0.500"/><path d="M6.500,2.500 l1.500,-2 l1,0.600" stroke="#2a50b0" stroke-width="1.100" fill="none"/><path d="M1,9 l2,1.500" stroke="#8a6" stroke-width="0.800"/></g>
<g id="i-sk3ds"><path d="M3.500,6.500 l5.500,-6 l1.800,1.200 l-5.500,6 l-2.300,0.800z" fill="#f4c81a" stroke="#a07808" stroke-width="0.500"/><path d="M6.500,2.500 l1.500,-2 l1,0.600" stroke="#2a50b0" stroke-width="1.100" fill="none"/><rect x="0.300" y="8" width="3.500" height="3" fill="#1a3a80"/><ellipse cx="7.500" cy="9.500" rx="3.500" ry="1.500" fill="#e8d8e0" stroke="#3a5aa0" stroke-width="0.700"/><path d="M1,7.500 h9" stroke="#333" stroke-width="0.700"/></g>
<g id="i-sweep"><path d="M1,5 q0,-4 4.500,-4 q4,0 5,3 l-2.500,1 q-0.500,-1.800 -2.500,-1.800 q-2,0 -2,2z" fill="#30343c" stroke="#111" stroke-width="0.600"/><ellipse cx="3" cy="5.500" rx="2.300" ry="1.400" fill="#e8e8e8" stroke="#222" stroke-width="0.700"/><path d="M5,6.500 l2,-1.500 h4 v4 l-2,1.800 h-4z" fill="#ffe020" stroke="#333" stroke-width="0.700"/><path d="M5,6.500 h4 v4.300 M9,6.500 l2,-1.500" fill="none" stroke="#333" stroke-width="0.600"/><rect x="1" y="7.500" width="3.500" height="3.300" fill="#2050c0"/></g>
<g id="i-eop"><circle cx="5.500" cy="5.500" r="5.200" fill="#e82a2a" stroke="#a01010" stroke-width="0.700"/><path d="M3.200,3.200 l4.600,4.600 M7.800,3.200 l-4.600,4.600" stroke="#fff" stroke-width="1.700"/></g>
<g id="ex"><rect x="-3" y="-3" width="6" height="6" fill="#fff" stroke="#8e8e8e" stroke-width="0.800"/><path d="M-1.700,0 h3.400" stroke="#222" stroke-width="0.900"/></g>
<g id="exp"><use href="#ex"/><path d="M0,-1.700 v3.400" stroke="#222" stroke-width="0.900"/></g>

</defs>
<path d="M8.500,155 V414.4" stroke="#a4a4a4" stroke-width="0.900" fill="none"/>
<path d="M21.5,192.5 V275.1" stroke="#a4a4a4" stroke-width="0.900" fill="none"/>
<path d="M21.5,357.1 V363.7" stroke="#a4a4a4" stroke-width="0.900" fill="none"/>
<path d="M21.5,382.4 V401.7" stroke="#a4a4a4" stroke-width="0.900" fill="none"/>
<use href="#i-cube" x="5.5" y="142.8"/>
<path d="M8.500,161.2 H17.500" stroke="#a4a4a4" stroke-width="0.900" fill="none"/>
<use href="#i-folderb" x="19.5" y="155.5"/>
<use href="#exp" x="8.5" y="161.0"/>
<path d="M8.500,173.8 H17.500" stroke="#a4a4a4" stroke-width="0.900" fill="none"/>
<use href="#i-view" x="19.5" y="168.1"/>
<use href="#exp" x="8.5" y="174.0"/>
<path d="M8.500,186.5 H17.500" stroke="#a4a4a4" stroke-width="0.900" fill="none"/>
<use href="#i-folder" x="19.5" y="180.8"/>
<use href="#ex" x="8.5" y="186.0"/>
<path d="M21.500,199.1 H31" stroke="#a4a4a4" stroke-width="0.900" fill="none"/>
<use href="#i-plane" x="33.0" y="193.4"/>
<path d="M21.500,211.8 H31" stroke="#a4a4a4" stroke-width="0.900" fill="none"/>
<use href="#i-plane" x="33.0" y="206.1"/>
<path d="M21.500,224.5 H31" stroke="#a4a4a4" stroke-width="0.900" fill="none"/>
<use href="#i-plane" x="33.0" y="218.8"/>
<path d="M21.500,237.1 H31" stroke="#a4a4a4" stroke-width="0.900" fill="none"/>
<use href="#i-axis" x="33.0" y="231.4"/>
<path d="M21.500,249.8 H31" stroke="#a4a4a4" stroke-width="0.900" fill="none"/>
<use href="#i-axis" x="33.0" y="244.1"/>
<path d="M21.500,262.4 H31" stroke="#a4a4a4" stroke-width="0.900" fill="none"/>
<use href="#i-axis" x="33.0" y="256.7"/>
<path d="M21.500,275.1 H31" stroke="#a4a4a4" stroke-width="0.900" fill="none"/>
<use href="#i-point" x="33.0" y="269.4"/>
<path d="M8.500,287.8 H17.500" stroke="#a4a4a4" stroke-width="0.900" fill="none"/>
<use href="#i-sketchs" x="19.5" y="282.1"/>
<path d="M8.500,300.4 H17.500" stroke="#a4a4a4" stroke-width="0.900" fill="none"/>
<use href="#i-sketch" x="19.5" y="294.7"/>
<path d="M8.500,313.1 H17.500" stroke="#a4a4a4" stroke-width="0.900" fill="none"/>
<use href="#i-sketch" x="19.5" y="307.4"/>
<path d="M8.500,325.7 H17.500" stroke="#a4a4a4" stroke-width="0.900" fill="none"/>
<use href="#i-sk3d" x="19.5" y="320.0"/>
<path d="M8.500,338.4 H17.500" stroke="#a4a4a4" stroke-width="0.900" fill="none"/>
<use href="#i-sk3ds" x="19.5" y="332.7"/>
<use href="#exp" x="8.5" y="338.0"/>
<path d="M8.500,351.1 H17.500" stroke="#a4a4a4" stroke-width="0.900" fill="none"/>
<use href="#i-plane" x="19.5" y="345.4"/>
<use href="#ex" x="8.5" y="351.0"/>
<path d="M21.500,363.7 H31" stroke="#a4a4a4" stroke-width="0.900" fill="none"/>
<use href="#i-plane" x="33.0" y="358.0"/>
<path d="M8.500,376.4 H17.500" stroke="#a4a4a4" stroke-width="0.900" fill="none"/>
<use href="#i-sweep" x="19.5" y="370.7"/>
<use href="#ex" x="8.5" y="376.0"/>
<path d="M21.500,389.0 H31" stroke="#a4a4a4" stroke-width="0.900" fill="none"/>
<use href="#i-sketchs" x="33.0" y="383.3"/>
<path d="M21.500,401.7 H31" stroke="#a4a4a4" stroke-width="0.900" fill="none"/>
<use href="#i-sk3ds" x="33.0" y="396.0"/>
<use href="#exp" x="21.5" y="402.0"/>
<path d="M8.500,414.4 H17.500" stroke="#a4a4a4" stroke-width="0.900" fill="none"/>
<use href="#i-eop" x="19.5" y="408.7"/>
</svg>
<svg class="abs" style="left:0;top:97px" width="174" height="44" viewBox="0 97 174 44">
<path d="M3,100.500 H161 M3,103.500 H161" stroke="#b4b4b4" stroke-width="1"/><path d="M3,101.500 H161 M3,104.500 H161" stroke="#fff" stroke-width="1"/><path d="M160.500,100 v5" stroke="#b4b4b4"/>
<path d="M164.800,100 l4,4 M168.800,100 l-4,4" stroke="#111" stroke-width="1.400"/>
<path d="M36.300,113.200 h6 l-3,3.200z" fill="#fff"/>
<path d="M160,110 h7 v7.500 h-2 l0.500,1.500 l-2.500,-1.500 h-3z" fill="#ffffc8" stroke="#222" stroke-width="0.900"/>
<text x="163.500" y="116.800" font-family="Liberation Sans,sans-serif" font-size="8" font-weight="bold" fill="#1a1aa0" text-anchor="middle">?</text>
<path d="M5.500,126.500 h9.500 l-3.700,4 v4 l-2,-1 v-3z" fill="#e8e8e8" stroke="#222" stroke-width="1"/>
<path d="M19.500,124 v13" stroke="#c4c4c4"/><path d="M20.500,124 v13" stroke="#fff"/>
<path d="M27,134.500 v-3 l1.500,-5 h2 l0.800,3 h1.400 l0.800,-3 h2 l1.500,5 v3 h-3.500 v-3 h-3 v3z" fill="#111"/>
</svg>
<!--/TREE-->
<!--BOTTOM-->
<!-- tab bar -->
<div class="abs" style="left:958.500px;top:97px;width:1.500px;height:382px;background:#ececec"></div>
<div class="abs" style="left:174px;top:478.500px;width:786px;height:1.500px;background:#fafafa"></div>
<div class="abs" style="left:173.500px;top:481px;width:13.500px;height:13.500px;background:linear-gradient(#fafafa,#d4d4d4);border:1px solid #6a6a6a"></div>
<div class="abs" style="left:186.500px;top:481px;width:14px;height:13.500px;background:linear-gradient(#fafafa,#d4d4d4);border:1px solid #6a6a6a"></div>
<div class="abs" style="left:201.500px;top:481px;width:13px;height:13.500px;background:linear-gradient(#fafafa,#d4d4d4);border:1px solid #8a8a8a"></div>
<div class="abs" style="left:270px;top:480.500px;width:45.500px;height:12.500px;background:linear-gradient(#e2e2e2,#c4c4c4);border:1px solid #8a8a8a;border-top:0;border-radius:0 0 5px 2px"></div>
<div class="abs" style="left:216px;top:479.500px;width:55px;height:13.500px;background:#fff;border:1px solid #8a8a8a;border-top:0;border-radius:0 0 5px 5px"></div>
<svg class="abs" style="left:172px;top:479px" width="100" height="17" viewBox="172 479 100 17">
<g fill="none" stroke="#333" stroke-width="0.900">
<rect x="175.500" y="483" width="7" height="5" fill="#e4e4e4"/><path d="M175.500,484.500 h7" stroke-width="1.200"/><rect x="177" y="485" width="7" height="5" fill="#eee"/><path d="M177,486.500 h7" stroke-width="1.200"/><rect x="178.500" y="487" width="6.500" height="5" fill="#fafafa"/><path d="M178.500,488.500 h6.500" stroke-width="1.200"/>
<rect x="189" y="483.500" width="4" height="3.500"/><rect x="194.500" y="483.500" width="4" height="3.500"/><rect x="189" y="488.500" width="4" height="3.500"/><rect x="194.500" y="488.500" width="4" height="3.500"/>
</g>
<path d="M205,488 h6 l-3,-3.500z" fill="#222"/>
<path d="M260,483 l4.500,4 M264.500,483 l-4.500,4" stroke="#666" stroke-width="0.900"/><rect x="260.300" y="482.700" width="4" height="4.500" fill="none" stroke="#888" stroke-width="0.600"/>
</svg>
<!-- status bar separators -->
<div class="abs" style="left:905px;top:498px;width:1px;height:12px;background:#c8c8c8"></div>
<div class="abs" style="left:932px;top:498px;width:1px;height:12px;background:#c8c8c8"></div>
<!-- taskbar -->
<div class="abs" style="left:0;top:511.500px;width:960px;height:1px;background:#6a5a4a"></div>
<div class="abs" style="left:42.500px;top:513px;width:37px;height:26px;border:1px solid #8c8074;border-radius:2px;background:linear-gradient(rgba(255,255,255,.22),rgba(255,255,255,.08) 50%,rgba(255,255,255,.02) 52%,rgba(255,255,255,.1))"></div>
<div class="abs" style="left:79.500px;top:514px;width:3px;height:24px;border:1px solid #7c7064;border-left:0;border-radius:0 2px 2px 0;background:rgba(255,255,255,.1)"></div>
<div class="abs" style="left:85.500px;top:513px;width:41.500px;height:26px;border:1px solid #8c8074;border-radius:2px;background:linear-gradient(rgba(255,255,255,.22),rgba(255,255,255,.08) 50%,rgba(255,255,255,.02) 52%,rgba(255,255,255,.1))"></div>
<div class="abs" style="left:172.500px;top:513px;width:41.500px;height:26px;border:1px solid #e8e0d4;border-radius:2px;background:linear-gradient(rgba(255,255,255,.62),rgba(255,255,255,.42) 50%,rgba(255,255,255,.3) 52%,rgba(255,255,255,.5));box-shadow:inset 0 0 0 1px rgba(255,255,255,.3)"></div>
<div class="abs" style="left:216.500px;top:513px;width:41px;height:26px;border:1px solid #9c9084;border-radius:2px;background:linear-gradient(rgba(255,255,255,.3),rgba(255,255,255,.12) 50%,rgba(255,255,255,.05) 52%,rgba(255,255,255,.15))"></div>
<svg class="abs" style="left:0;top:511px" width="960" height="29" viewBox="0 511 960 29">
<defs>
<radialGradient id="orb" cx="0.5" cy="0.85" r="0.9"><stop offset="0" stop-color="#3ad0ff"/><stop offset="0.35" stop-color="#1a78c8"/><stop offset="0.8" stop-color="#123a78"/><stop offset="1" stop-color="#0c2048"/></radialGradient>
<linearGradient id="fold1" x1="0" x2="0" y1="0" y2="1"><stop offset="0" stop-color="#fff0a8"/><stop offset="1" stop-color="#e8c458"/></linearGradient>
<linearGradient id="stm" x1="0" x2="0" y1="0" y2="1"><stop offset="0" stop-color="#4a4a4a"/><stop offset="1" stop-color="#1a1a1a"/></linearGradient>
<linearGradient id="sky" x1="0" x2="0" y1="0" y2="1"><stop offset="0" stop-color="#1a40c0"/><stop offset="0.6" stop-color="#6a9ae8"/><stop offset="1" stop-color="#e8f0ff"/></linearGradient>
</defs>
<!-- start orb -->
<circle cx="19" cy="526" r="12.800" fill="url(#orb)" stroke="#1a2a48" stroke-width="0.800"/>
<ellipse cx="19" cy="519.500" rx="10" ry="5.500" fill="#fff" fill-opacity="0.28"/>
<path d="M13,520.500 q3,-1.800 5.500,-0.500 l-1.200,5 q-2.800,-1 -5.500,0.500z" fill="#f0602a"/>
<path d="M19.500,520.200 q3,1.300 5.800,-0.700 l-1.200,5.200 q-2.800,1.800 -5.800,0.500z" fill="#8ac840"/>
<path d="M11.500,526.700 q2.800,-1.700 5.500,-0.500 l-1.200,5 q-2.800,-1 -5.500,0.500z" fill="#3aa0e8"/>
<path d="M18,526.500 q3,1.300 5.800,-0.700 l-1.200,5.200 q-2.800,1.800 -5.800,0.500z" fill="#f8c830"/>
<!-- explorer -->
<path d="M50,519 h7 l1.500,2 h12 v14 h-20.500z" fill="#e8c860" stroke="#c8a040" stroke-width="0.600"/>
<path d="M50.500,521.500 h20 v13.500 h-20z" fill="url(#fold1)"/>
<rect x="52" y="517.500" width="2" height="1.800" fill="#30b030"/><rect x="58" y="518.500" width="2" height="1.800" fill="#e03030"/><rect x="63.500" y="519.500" width="2" height="1.800" fill="#3080e0"/>
<path d="M52,536.500 v-6 q0,-2.500 2.500,-2.500 h11.500 q2.500,0 2.500,2.500 v6 h-3.500 v-5 h-9.500 v5z" fill="#7ec4ee" stroke="#4a94c8" stroke-width="0.600"/>
<!-- chrome -->
<circle cx="106.400" cy="526" r="10.200" fill="#e8402a"/>
<path d="M106.400,526 L97.600,520.900 A10.200,10.200 0 0 0 106.400,536.200 L111.500,527.500Z" fill="#3aa84a"/>
<path d="M106.400,526 L106.400,536.200 A10.200,10.200 0 0 0 115.200,520.900 L106.400,520.900Z" fill="#f8c820"/>
<path d="M106.400,526 L97.600,520.900 A10.200,10.200 0 0 1 115.200,520.900 L106.400,520.900Z" fill="#e8402a"/>
<circle cx="106.400" cy="526" r="4.700" fill="#f4f4f4"/><circle cx="106.400" cy="526" r="3.700" fill="#4a8ae8"/>
<!-- steam -->
<rect x="138.500" y="515" width="22.500" height="22" rx="3" fill="url(#stm)"/>
<circle cx="154.500" cy="522.500" r="3.600" fill="none" stroke="#c8c8c8" stroke-width="1.600"/><circle cx="154.500" cy="522.500" r="1.500" fill="#e0e0e0"/>
<path d="M138.500,526.500 l7,3 M151.500,524.500 l-4,4.500" stroke="#b8b8b8" stroke-width="2.600"/><circle cx="146.500" cy="530.500" r="2.600" fill="#3a3a3a" stroke="#c0c0c0" stroke-width="1.200"/>
<!-- inventor -->
<rect x="183" y="517" width="21.500" height="19.500" fill="#0c0c0c"/>
<rect x="183" y="531" width="21.500" height="5.500" fill="#f0a010"/>
<path d="M185,516.500 l5.500,-1 l0.400,1.500 l-1.800,0.400 l3,11 l2,-0.400 l0.400,1.600 l-6,1.300 l-0.400,-1.600 l2,-0.500 l-3,-11 l-1.800,0.400z" fill="#f4f4f4"/>
<path d="M197,520 l5,4 v5 l-3,-1 v-4z" fill="#b0b0b0"/><rect x="196" y="522" width="4" height="5" fill="#6a6a6a"/>
<text x="203.500" y="536" font-family="Liberation Sans,sans-serif" font-weight="bold" font-style="italic" font-size="4.500" fill="#fff" text-anchor="end">PRO</text>
<!-- picture app -->
<rect x="226.500" y="515" width="16.500" height="21" fill="#fff"/><rect x="228" y="516.500" width="13.500" height="16" fill="url(#sky)"/>
<path d="M228,528 q4,-2 7,0 t6.500,-1 v3 h-13.500z" fill="#1a2a70"/><path d="M231,518 q3,-1 5,1 q3,-1 4,2 q-5,2 -9,0z" fill="#e8f0ff" fill-opacity="0.850"/>
<path d="M247,521.500 l-13,12" stroke="#d01818" stroke-width="1.700"/><path d="M235,532.500 l-2.500,3" stroke="#222" stroke-width="1.400"/>
<!-- tray -->
<path d="M835.500,529 h5 l-2.500,-3z" fill="#fff"/>
<path d="M851.500,521 v10.500" stroke="#fff" stroke-width="1.200"/><path d="M852,521.500 q2.500,-1 4,0 t4,0 v5 q-2.500,1 -4,0 t-4,0z" fill="#fff"/>
<path d="M869,521.500 h5 l4.500,8 h-5z" fill="#f8c820"/><path d="M869,521.500 l-4.500,8 l2.500,4 l4.500,-8z" fill="#2aa84a"/><path d="M867,533.500 l2.500,-4 h9 l-2.500,4z" fill="#3a7ae8"/>
<rect x="885.500" y="522" width="7.500" height="10" rx="1" fill="#444" stroke="#999" stroke-width="0.600"/><path d="M888.500,524 v-2 M891,524 v-2 M887.500,524 h4.500 v2.500 q-2.200,2 -4.500,0z" stroke="#fff" stroke-width="1" fill="#fff"/><path d="M884.500,527.500 l4.500,4.500 M889,527.500 l-4.500,4.500" stroke="#e81818" stroke-width="1.500"/>
<!-- show desktop -->
<rect x="951" y="512.500" width="9" height="28" fill="#6a625a" fill-opacity="0.8" stroke="#9a9088" stroke-width="0.800"/><rect x="952" y="513.500" width="3" height="26" fill="#fff" fill-opacity="0.15"/>
</svg>

<!--/BOTTOM-->
<!--TEXT-->
<span class="t" style="left:37.0px;top:16.6px;font-size:10px;line-height:12.00px;color:#f4f4f4;transform:scaleX(0.841);-webkit-text-stroke:0.2px #f4f4f4;">3D Model</span>
<span class="t" style="left:86.8px;top:16.6px;font-size:10px;line-height:12.00px;color:#f4f4f4;transform:scaleX(0.837);-webkit-text-stroke:0.2px #f4f4f4;">Inspect</span>
<span class="t" style="left:128.0px;top:16.6px;font-size:10px;line-height:12.00px;color:#f4f4f4;transform:scaleX(0.869);-webkit-text-stroke:0.2px #f4f4f4;">Tools</span>
<span class="t" style="left:162.5px;top:16.6px;font-size:10px;line-height:12.00px;color:#f4f4f4;transform:scaleX(0.830);-webkit-text-stroke:0.2px #f4f4f4;">Manage</span>
<span class="t" style="left:207.0px;top:16.6px;font-size:10px;line-height:12.00px;color:#2a2a2a;transform:scaleX(0.781);">View</span>
<span class="t" style="left:238.5px;top:16.6px;font-size:10px;line-height:12.00px;color:#f4f4f4;transform:scaleX(0.842);-webkit-text-stroke:0.2px #f4f4f4;">Environments</span>
<span class="t" style="left:303.7px;top:16.6px;font-size:10px;line-height:12.00px;color:#f4f4f4;transform:scaleX(0.852);-webkit-text-stroke:0.2px #f4f4f4;">Vault</span>
<span class="t" style="left:336.7px;top:16.6px;font-size:10px;line-height:12.00px;color:#f4f4f4;transform:scaleX(0.788);-webkit-text-stroke:0.2px #f4f4f4;">Get Started</span>
<span class="t" style="left:391.7px;top:16.6px;font-size:10px;line-height:12.00px;color:#f4f4f4;transform:scaleX(0.834);-webkit-text-stroke:0.2px #f4f4f4;">Online</span>
<span class="t" style="left:478.3px;top:2.0px;font-size:10px;line-height:12.00px;color:#111;transform:scaleX(0.867);-webkit-text-stroke:0.2px #111;">Airfoil</span>
<span class="t" style="left:548.7px;top:2.3px;font-size:9.5px;line-height:11.40px;color:#8a8a8a;transform:scaleX(0.768);font-style:italic;">Type a keyword or phrase</span>
<span class="t" style="left:757.0px;top:2.3px;font-size:9.5px;line-height:11.40px;color:#e8e8e8;transform:scaleX(0.877);">liewdarwin@li...</span>
<span class="t" style="left:200.0px;top:2.3px;font-size:9.5px;line-height:11.40px;color:#a0a0a0;transform:scaleX(0.917);font-style:italic;">Material</span>
<span class="t" style="left:298.7px;top:2.3px;font-size:9.5px;line-height:11.40px;color:#111;transform:scaleX(0.857);-webkit-text-stroke:0.25px #111;">Carbon Fib</span>
<span class="t" style="left:15.0px;top:20.1px;font-size:7px;line-height:8.40px;color:#333;transform:scaleX(0.758);font-weight:700;-webkit-text-stroke:0.2px #333;">PRO</span>
<span class="t" style="left:63.8px;top:33.9px;font-size:9.7px;line-height:11.64px;color:#3c3c3c;transform:scaleX(0.840);-webkit-text-stroke:0.25px #3c3c3c;">Center of Gravity</span>
<span class="t" style="left:63.8px;top:51.1px;font-size:9.7px;line-height:11.64px;color:#3c3c3c;transform:scaleX(0.804);-webkit-text-stroke:0.25px #3c3c3c;">Analysis</span>
<span class="t" style="left:63.8px;top:67.7px;font-size:9.7px;line-height:11.64px;color:#3c3c3c;transform:scaleX(0.835);-webkit-text-stroke:0.25px #3c3c3c;">iMate Glyphs</span>
<span class="t" style="left:11.3px;top:58.4px;font-size:9.7px;line-height:11.64px;color:#3c3c3c;transform:scaleX(0.875);-webkit-text-stroke:0.25px #3c3c3c;">Object</span>
<span class="t" style="left:8.7px;top:68.9px;font-size:9.7px;line-height:11.64px;color:#3c3c3c;transform:scaleX(0.884);-webkit-text-stroke:0.25px #3c3c3c;">Visibility</span>
<span class="t" style="left:50.0px;top:83.6px;font-size:9.7px;line-height:11.64px;color:#3c3c3c;transform:scaleX(0.876);-webkit-text-stroke:0.25px #3c3c3c;">Visibility</span>
<span class="t" style="left:139.2px;top:58.4px;font-size:9.7px;line-height:11.64px;color:#3c3c3c;transform:scaleX(0.819);-webkit-text-stroke:0.25px #3c3c3c;">Visual Style</span>
<span class="t" style="left:205.3px;top:33.9px;font-size:9.7px;line-height:11.64px;color:#3c3c3c;transform:scaleX(0.820);-webkit-text-stroke:0.25px #3c3c3c;">Shadows</span>
<span class="t" style="left:205.3px;top:51.1px;font-size:9.7px;line-height:11.64px;color:#3c3c3c;transform:scaleX(0.845);-webkit-text-stroke:0.25px #3c3c3c;">Reflections</span>
<span class="t" style="left:193.0px;top:67.7px;font-size:9.7px;line-height:11.64px;color:#3c3c3c;transform:scaleX(0.864);-webkit-text-stroke:0.25px #3c3c3c;">Two Lights</span>
<span class="t" style="left:276.7px;top:33.9px;font-size:9.7px;line-height:11.64px;color:#3c3c3c;transform:scaleX(0.877);-webkit-text-stroke:0.25px #3c3c3c;">Orthographic</span>
<span class="t" style="left:357.5px;top:33.9px;font-size:9.7px;line-height:11.64px;color:#3c3c3c;transform:scaleX(0.829);-webkit-text-stroke:0.25px #3c3c3c;">Textures On</span>
<span class="t" style="left:276.7px;top:51.1px;font-size:9.7px;line-height:11.64px;color:#3c3c3c;transform:scaleX(0.841);-webkit-text-stroke:0.25px #3c3c3c;">Ground Plane</span>
<span class="t" style="left:276.7px;top:67.7px;font-size:9.7px;line-height:11.64px;color:#b4b4b4;transform:scaleX(0.818);-webkit-text-stroke:0.25px #b4b4b4;">Ray Tracing</span>
<span class="t" style="left:297.0px;top:83.6px;font-size:9.7px;line-height:11.64px;color:#3c3c3c;transform:scaleX(0.838);-webkit-text-stroke:0.25px #3c3c3c;">Appearance</span>
<span class="t" style="left:438.7px;top:33.9px;font-size:9.7px;line-height:11.64px;color:#b4b4b4;transform:scaleX(0.816);-webkit-text-stroke:0.25px #b4b4b4;">Slice Graphics</span>
<span class="t" style="left:438.7px;top:51.1px;font-size:9.7px;line-height:11.64px;color:#3c3c3c;transform:scaleX(0.826);-webkit-text-stroke:0.25px #3c3c3c;">End Section View</span>
<span class="t" style="left:532.8px;top:58.4px;font-size:9.7px;line-height:11.64px;color:#3c3c3c;transform:scaleX(0.757);-webkit-text-stroke:0.25px #3c3c3c;">User</span>
<span class="t" style="left:524.2px;top:68.9px;font-size:9.7px;line-height:11.64px;color:#3c3c3c;transform:scaleX(0.862);-webkit-text-stroke:0.25px #3c3c3c;">Interface</span>
<span class="t" style="left:566.0px;top:58.4px;font-size:9.7px;line-height:11.64px;color:#3c3c3c;transform:scaleX(0.818);-webkit-text-stroke:0.25px #3c3c3c;">Clean</span>
<span class="t" style="left:564.7px;top:68.9px;font-size:9.7px;line-height:11.64px;color:#3c3c3c;transform:scaleX(0.782);-webkit-text-stroke:0.25px #3c3c3c;">Screen</span>
<span class="t" style="left:605.3px;top:58.4px;font-size:9.7px;line-height:11.64px;color:#3c3c3c;transform:scaleX(0.848);-webkit-text-stroke:0.25px #3c3c3c;">Switch</span>
<span class="t" style="left:644.5px;top:58.4px;font-size:9.7px;line-height:11.64px;color:#3c3c3c;transform:scaleX(0.844);-webkit-text-stroke:0.25px #3c3c3c;">Tile All</span>
<span class="t" style="left:607.0px;top:83.6px;font-size:9.7px;line-height:11.64px;color:#3c3c3c;transform:scaleX(0.852);-webkit-text-stroke:0.25px #3c3c3c;">Windows</span>
<span class="t" style="left:695.8px;top:33.9px;font-size:9.7px;line-height:11.64px;color:#3c3c3c;transform:scaleX(0.795);-webkit-text-stroke:0.25px #3c3c3c;">Cascade</span>
<span class="t" style="left:695.8px;top:51.1px;font-size:9.7px;line-height:11.64px;color:#3c3c3c;transform:scaleX(0.835);-webkit-text-stroke:0.25px #3c3c3c;">New</span>
<span class="t" style="left:741.2px;top:58.4px;font-size:9.7px;line-height:11.64px;color:#3c3c3c;transform:scaleX(0.866);-webkit-text-stroke:0.25px #3c3c3c;">Full Navigation</span>
<span class="t" style="left:758.0px;top:68.9px;font-size:9.7px;line-height:11.64px;color:#3c3c3c;transform:scaleX(0.830);-webkit-text-stroke:0.25px #3c3c3c;">Wheel</span>
<span class="t" style="left:831.2px;top:33.9px;font-size:9.7px;line-height:11.64px;color:#3c3c3c;transform:scaleX(0.771);-webkit-text-stroke:0.25px #3c3c3c;">Pan</span>
<span class="t" style="left:831.2px;top:51.1px;font-size:9.7px;line-height:11.64px;color:#3c3c3c;transform:scaleX(0.888);-webkit-text-stroke:0.25px #3c3c3c;">Zoom Window</span>
<span class="t" style="left:831.2px;top:67.7px;font-size:9.7px;line-height:11.64px;color:#3c3c3c;transform:scaleX(0.871);-webkit-text-stroke:0.25px #3c3c3c;">Orbit</span>
<span class="t" style="left:919.7px;top:33.9px;font-size:9.7px;line-height:11.64px;color:#3c3c3c;transform:scaleX(0.875);-webkit-text-stroke:0.25px #3c3c3c;">Look At</span>
<span class="t" style="left:825.8px;top:83.6px;font-size:9.7px;line-height:11.64px;color:#3c3c3c;transform:scaleX(0.860);-webkit-text-stroke:0.25px #3c3c3c;">Navigate</span>
<span class="t" style="left:7.9px;top:109.5px;font-size:9.6px;line-height:11.52px;color:#fff;transform:scaleX(0.934);font-weight:700;">Model</span>
<span class="t" style="left:19.5px;top:143.3px;font-size:8.6px;line-height:10.32px;color:#1c1c1c;transform:scaleX(0.860);-webkit-text-stroke:0.2px #1c1c1c;">Airfoil</span>
<span class="t" style="left:32.7px;top:156.0px;font-size:8.6px;line-height:10.32px;color:#1c1c1c;transform:scaleX(0.844);-webkit-text-stroke:0.2px #1c1c1c;">Solid Bodies(1)</span>
<span class="t" style="left:32.7px;top:168.7px;font-size:8.6px;line-height:10.32px;color:#1c1c1c;transform:scaleX(0.868);-webkit-text-stroke:0.2px #1c1c1c;">View: Master</span>
<span class="t" style="left:32.7px;top:181.3px;font-size:8.6px;line-height:10.32px;color:#1c1c1c;transform:scaleX(0.850);-webkit-text-stroke:0.2px #1c1c1c;">Origin</span>
<span class="t" style="left:46.0px;top:194.0px;font-size:8.6px;line-height:10.32px;color:#1c1c1c;transform:scaleX(0.806);-webkit-text-stroke:0.2px #1c1c1c;">YZ Plane</span>
<span class="t" style="left:46.0px;top:206.6px;font-size:8.6px;line-height:10.32px;color:#1c1c1c;transform:scaleX(0.806);-webkit-text-stroke:0.2px #1c1c1c;">XZ Plane</span>
<span class="t" style="left:46.0px;top:219.3px;font-size:8.6px;line-height:10.32px;color:#1c1c1c;transform:scaleX(0.799);-webkit-text-stroke:0.2px #1c1c1c;">XY Plane</span>
<span class="t" style="left:46.0px;top:232.0px;font-size:8.6px;line-height:10.32px;color:#1c1c1c;transform:scaleX(0.858);-webkit-text-stroke:0.2px #1c1c1c;">X Axis</span>
<span class="t" style="left:46.0px;top:244.6px;font-size:8.6px;line-height:10.32px;color:#1c1c1c;transform:scaleX(0.864);-webkit-text-stroke:0.2px #1c1c1c;">Y Axis</span>
<span class="t" style="left:46.0px;top:257.3px;font-size:8.6px;line-height:10.32px;color:#1c1c1c;transform:scaleX(0.876);-webkit-text-stroke:0.2px #1c1c1c;">Z Axis</span>
<span class="t" style="left:46.0px;top:269.9px;font-size:8.6px;line-height:10.32px;color:#1c1c1c;transform:scaleX(0.900);-webkit-text-stroke:0.2px #1c1c1c;">Center Point</span>
<span class="t" style="left:32.7px;top:282.6px;font-size:8.6px;line-height:10.32px;color:#1c1c1c;transform:scaleX(0.860);-webkit-text-stroke:0.2px #1c1c1c;">NACA MH60 Airfoil</span>
<span class="t" style="left:32.7px;top:295.3px;font-size:8.6px;line-height:10.32px;color:#1c1c1c;transform:scaleX(0.869);-webkit-text-stroke:0.2px #1c1c1c;">Sketch3</span>
<span class="t" style="left:32.7px;top:307.9px;font-size:8.6px;line-height:10.32px;color:#1c1c1c;transform:scaleX(0.869);-webkit-text-stroke:0.2px #1c1c1c;">Sketch4</span>
<span class="t" style="left:32.7px;top:320.6px;font-size:8.6px;line-height:10.32px;color:#1c1c1c;transform:scaleX(0.855);-webkit-text-stroke:0.2px #1c1c1c;">3D Sketch1</span>
<span class="t" style="left:32.7px;top:333.2px;font-size:8.6px;line-height:10.32px;color:#1c1c1c;transform:scaleX(0.855);-webkit-text-stroke:0.2px #1c1c1c;">3D Sketch2</span>
<span class="t" style="left:32.7px;top:345.9px;font-size:8.6px;line-height:10.32px;color:#1c1c1c;transform:scaleX(0.867);-webkit-text-stroke:0.2px #1c1c1c;">Work Plane1</span>
<span class="t" style="left:46.0px;top:358.6px;font-size:8.6px;line-height:10.32px;color:#1c1c1c;transform:scaleX(0.799);-webkit-text-stroke:0.2px #1c1c1c;">XY Plane</span>
<span class="t" style="left:32.7px;top:371.2px;font-size:8.6px;line-height:10.32px;color:#1c1c1c;transform:scaleX(0.869);-webkit-text-stroke:0.2px #1c1c1c;">Sweep1</span>
<span class="t" style="left:46.0px;top:383.9px;font-size:8.6px;line-height:10.32px;color:#1c1c1c;transform:scaleX(0.860);-webkit-text-stroke:0.2px #1c1c1c;">NACA MH60 Airfoil</span>
<span class="t" style="left:46.0px;top:396.5px;font-size:8.6px;line-height:10.32px;color:#1c1c1c;transform:scaleX(0.855);-webkit-text-stroke:0.2px #1c1c1c;">3D Sketch2</span>
<span class="t" style="left:32.7px;top:409.2px;font-size:8.6px;line-height:10.32px;color:#1c1c1c;transform:scaleX(0.895);-webkit-text-stroke:0.2px #1c1c1c;">End of Part</span>
<span class="t" style="left:221.5px;top:481.5px;font-size:9.5px;line-height:11.40px;color:#1a1a1a;transform:scaleX(0.919);-webkit-text-stroke:0.25px #1a1a1a;">Airfoil.ipt</span>
<span class="t" style="left:277.3px;top:481.5px;font-size:9.5px;line-height:11.40px;color:#1a1a1a;transform:scaleX(0.922);-webkit-text-stroke:0.25px #1a1a1a;">Airfoil-1</span>
<span class="t" style="left:1.0px;top:498.3px;font-size:9.5px;line-height:11.40px;color:#1a1a1a;transform:scaleX(0.822);-webkit-text-stroke:0.2px #1a1a1a;">For Help, press F1</span>
<span class="t" style="left:911.5px;top:498.6px;font-size:9px;line-height:10.80px;color:#222;transform:scaleX(0.598);">1</span>
<span class="t" style="left:937.5px;top:498.6px;font-size:9px;line-height:10.80px;color:#222;transform:scaleX(0.897);">2</span>
<span class="t" style="left:910.0px;top:514.8px;font-size:9.5px;line-height:11.40px;color:#fff;transform:scaleX(0.819);-webkit-text-stroke:0.25px #fff;">4:56 PM</span>
<span class="t" style="left:908.3px;top:526.9px;font-size:9.5px;line-height:11.40px;color:#fff;transform:scaleX(0.871);-webkit-text-stroke:0.25px #fff;">1/5/2014</span>
<!--/TEXT-->
</body>
</html>
